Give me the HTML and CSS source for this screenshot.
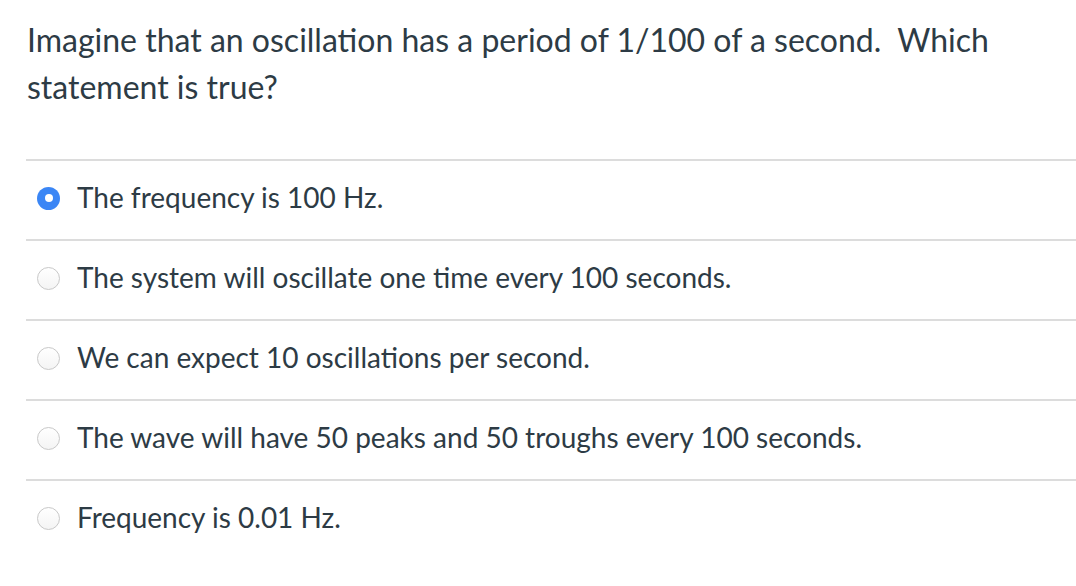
FILE: index.html
```html
<!DOCTYPE html>
<html>
<head>
<meta charset="utf-8">
<link rel="stylesheet" href="styles.css">
</head>
<body>
<div class="question">
  <div class="qtext">Imagine that an oscillation has a period of 1/100 of a second.&nbsp; Which statement is true?</div>
  <div class="answers">
    <label class="answer"><span class="radio checked"></span><span class="atext">The frequency is 100 Hz.</span></label>
    <label class="answer"><span class="radio"></span><span class="atext">The system will oscillate one time every 100 seconds.</span></label>
    <label class="answer"><span class="radio"></span><span class="atext">We can expect 10 oscillations per second.</span></label>
    <label class="answer"><span class="radio"></span><span class="atext">The wave will have 50 peaks and 50 troughs every 100 seconds.</span></label>
    <label class="answer"><span class="radio"></span><span class="atext">Frequency is 0.01 Hz.</span></label>
  </div>
</div>
</body>
</html>
```
FILE: styles.css
```css
html, body {
  margin: 0;
  padding: 0;
  background: #ffffff;
}
body {
  font-family: Lato, "Open Sans", sans-serif;
  color: #2d3b45;
}
.question {
  padding: 16px 0 0 26px;
}
.qtext {
  font-size: 32px;
  line-height: 47px;
  padding-left: 1px;
  width: 1010px;
  margin-bottom: 49px;
}
.answers {
  display: flex;
  flex-direction: column;
}
.answer {
  display: flex;
  align-items: center;
  height: 78px;
  border-top: 2px solid #dcdcdc;
  box-sizing: content-box;
}
.radio {
  width: 23px;
  height: 23px;
  box-sizing: border-box;
  border-radius: 50%;
  border: 1px solid #c8c8c8;
  background: linear-gradient(#ffffff, #f4f4f4);
  margin: 0 17px 0 11px;
  flex: none;
  display: flex;
  align-items: center;
  justify-content: center;
  position: relative;
  top: -2px;
}
.radio.checked {
  border: none;
  background: #3b86f5;
}
.radio.checked::after {
  content: "";
  width: 8px;
  height: 8px;
  border-radius: 50%;
  background: #ffffff;
}
.atext {
  font-size: 28px;
  line-height: 32px;
  position: relative;
  top: -3px;
}
```
